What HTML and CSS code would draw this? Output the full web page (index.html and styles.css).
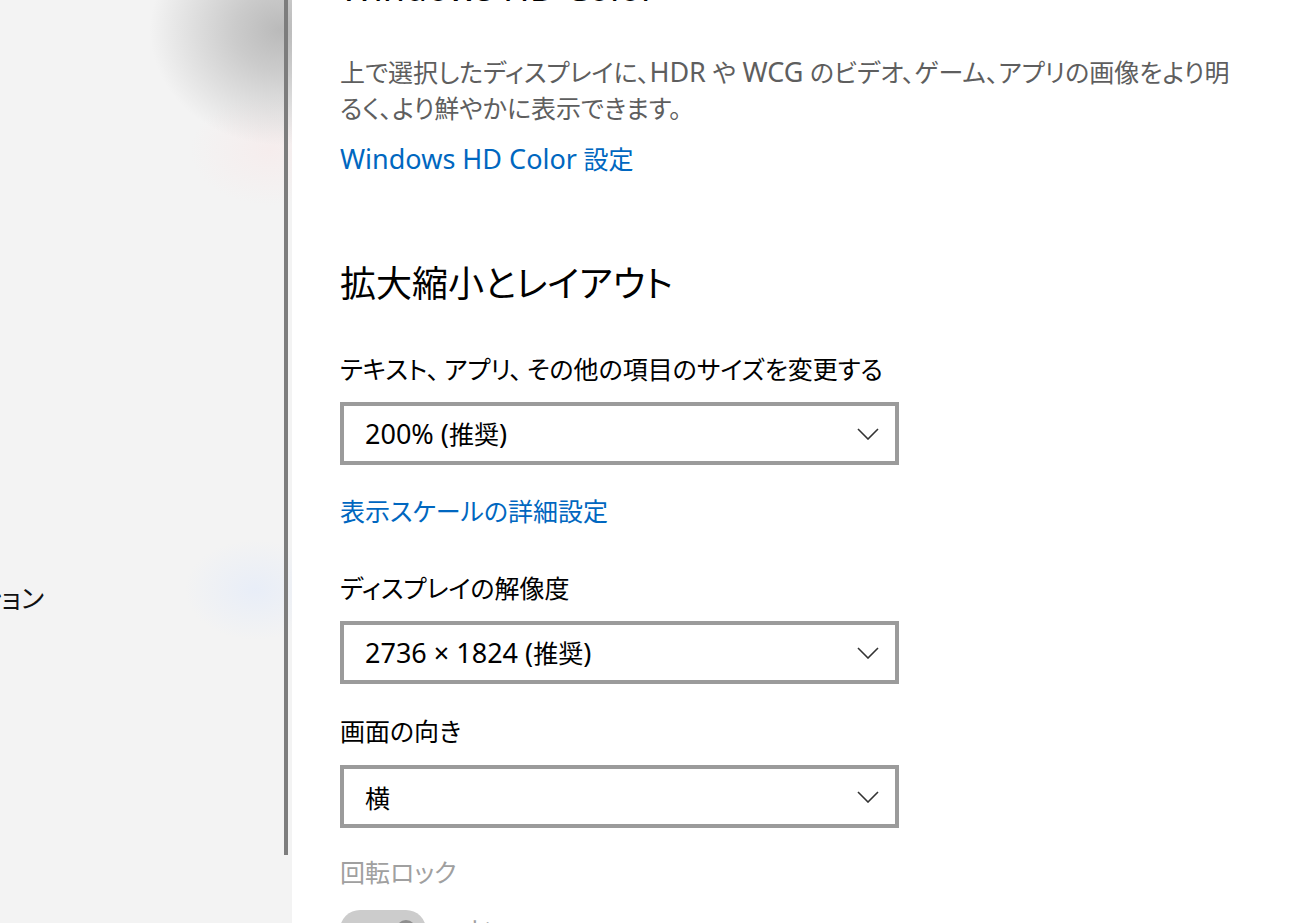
FILE: index.html
```html
<!DOCTYPE html>
<html lang="ja">
<head>
<meta charset="utf-8">
<title>ディスプレイ</title>
<link rel="stylesheet" href="styles.css">
</head>
<body>
<div class="window">
  <aside class="nav">
    <div class="nav-list">
      <div class="nav-item">このPCへのプロジェクション</div>
    </div>
    <div class="scrollbar"><div class="thumb"></div></div>
  </aside>
  <main class="content">
    <h2 class="title title-top">Windows HD Color</h2>
    <p class="desc">上で選択したディスプレイに、<span class="latin">HDR</span> や <span class="latin">WCG</span> のビデオ、ゲーム、アプリの画像をより明るく、より鮮やかに表示できます。</p>
    <a class="link link-hd" href="#"><span class="latin">Windows HD Color</span> 設定</a>

    <h2 class="title title-scale">拡大縮小とレイアウト</h2>

    <div class="label label-first">テキスト<span class="comma">、</span>アプリ<span class="comma">、</span>その他の項目のサイズを変更する</div>
    <div class="select">
      <span class="select-value"><span class="latin">200% (</span>推奨<span class="latin">)</span></span>
      <svg class="chevron" width="22" height="12" viewBox="0 0 22 12"><path d="M1 1 L11 11 L21 1" fill="none" stroke="#333" stroke-width="1.6"/></svg>
    </div>
    <a class="link link-scale" href="#">表示スケールの詳細設定</a>

    <div class="label label-res">ディスプレイの解像度</div>
    <div class="select">
      <span class="select-value"><span class="latin">2736 × 1824 (</span>推奨<span class="latin">)</span></span>
      <svg class="chevron" width="22" height="12" viewBox="0 0 22 12"><path d="M1 1 L11 11 L21 1" fill="none" stroke="#333" stroke-width="1.6"/></svg>
    </div>

    <div class="label label-orient">画面の向き</div>
    <div class="select select-last">
      <span class="select-value">横</span>
      <svg class="chevron" width="22" height="12" viewBox="0 0 22 12"><path d="M1 1 L11 11 L21 1" fill="none" stroke="#333" stroke-width="1.6"/></svg>
    </div>

    <div class="label label-disabled">回転ロック</div>
    <div class="toggle-row">
      <div class="toggle"><div class="knob"></div></div>
      <span class="toggle-text">オン</span>
    </div>
  </main>
</div>
</body>
</html>
```
FILE: styles.css
```css
html, body {
  margin: 0;
  padding: 0;
}
body {
  width: 1304px;
  height: 923px;
  overflow: hidden;
  font-family: "Noto Sans", "Noto Sans CJK JP", sans-serif;
  font-feature-settings: "palt";
  color: #000;
}
.window {
  display: flex;
  height: 923px;
}
.nav {
  width: 292px;
  flex: none;
  display: flex;
  background:
    radial-gradient(ellipse 130px 115px at 280px 30px, #bababa 0%, rgba(190,190,190,0.75) 35%, rgba(243,243,243,0) 100%),
    radial-gradient(ellipse 80px 55px at 270px 150px, rgba(246,236,236,0.9) 0%, rgba(243,243,243,0) 100%),
    radial-gradient(ellipse 70px 50px at 255px 590px, rgba(231,237,248,0.9) 0%, rgba(243,243,243,0) 100%),
    #f3f3f3;
}
.nav-list {
  flex: 1;
  overflow: hidden;
  padding-top: 580px;
}
.nav-item {
  font-size: 26px;
  line-height: 36px;
  white-space: nowrap;
  margin-left: -273px;
  color: #111;
}
.scrollbar {
  width: 8px;
  flex: none;
}
.thumb {
  width: 4px;
  height: 855px;
  background: #7d7d7d;
}
.content {
  flex: 1;
  background: #fff;
  padding-left: 48px;
  display: flex;
  flex-direction: column;
  align-items: flex-start;
}
.content > * {
  flex: none;
}
.latin {
  font-size: 27px;
}
.comma {
  margin-right: 5px;
}
.title {
  margin: 0;
  font-weight: 400;
  font-size: 36px;
  line-height: 52px;
}
.title-top {
  margin-top: -38px;
}
.desc {
  margin: 40px 0 0;
  width: 900px;
  font-size: 25px;
  line-height: 36px;
  color: #5e5e5e;
}
.link {
  color: #0067c0;
  text-decoration: none;
  font-size: 25px;
  line-height: 36px;
}
.link-hd { margin-top: 15px; }
.title-scale { margin-top: 81px; }
.label {
  font-size: 25px;
  line-height: 36px;
}
.label-first { margin-top: 41px; }
.label-res { margin-top: 41px; }
.label-orient { margin-top: 29px; }
.label-disabled { margin-top: 26px; color: #a0a0a0; }
.link-scale { margin-top: 28px; }
.select {
  box-sizing: border-box;
  width: 559px;
  height: 63px;
  border: 4px solid #9b9b9b;
  margin-top: 15px;
  display: flex;
  align-items: center;
  justify-content: space-between;
  padding: 0 16px 0 21px;
  font-size: 25px;
}
.select-last { margin-top: 16px; }
.chevron {
  display: block;
}
.toggle-row {
  margin-top: 20px;
  display: flex;
  align-items: center;
  gap: 34px;
}
.toggle {
  width: 86px;
  height: 40px;
  border-radius: 20px;
  background: #cccccc;
  display: flex;
  align-items: center;
  justify-content: flex-end;
  padding-right: 10px;
  box-sizing: border-box;
}
.knob {
  width: 20px;
  height: 20px;
  border-radius: 50%;
  background: #8f8f8f;
}
.toggle-text {
  font-size: 25px;
  line-height: 36px;
  color: #a0a0a0;
}
```
